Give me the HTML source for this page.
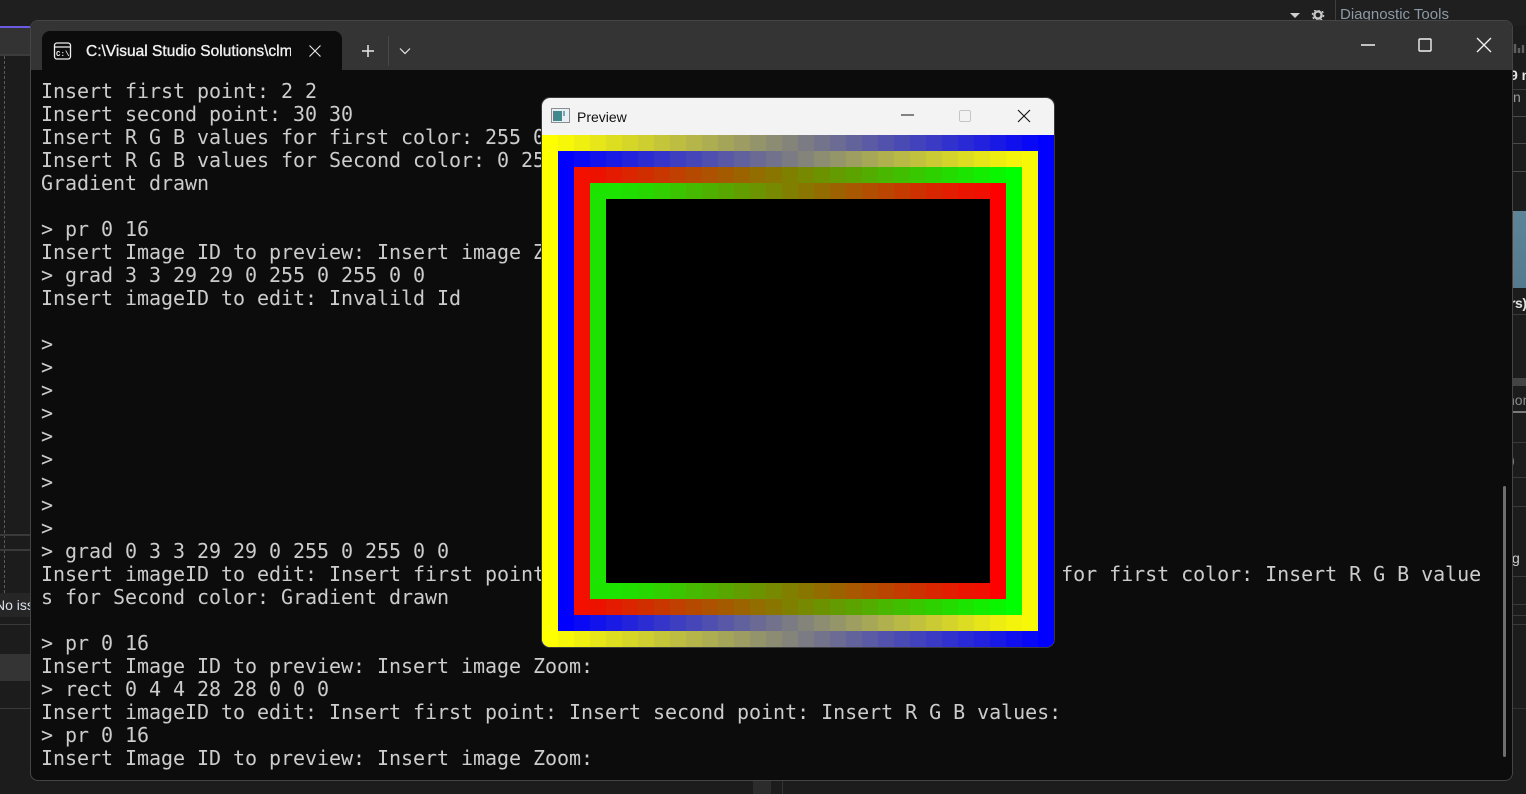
<!DOCTYPE html>
<html lang="en"><head><meta charset="utf-8"><title>Preview</title>
<style>
html,body{margin:0;padding:0;width:1526px;height:794px;overflow:hidden;background:#1c1c1c}
.a{position:absolute}
.l{position:absolute;background:#3a3a3a}
#term{position:absolute;left:30px;top:20px;width:1481px;height:759px;background:#0c0c0c;border:1px solid #454545;border-radius:8px;overflow:hidden}
#bar{position:absolute;left:0;top:0;width:100%;height:49px;background:#343434}
#tab{position:absolute;left:11px;top:10px;width:300px;height:39px;background:#0c0c0c;border-radius:8px 8px 0 0}
#tt{position:absolute;left:44px;top:11px;width:205px;height:20px;overflow:hidden;white-space:nowrap;font:15.5px/20px "Liberation Sans",sans-serif;-webkit-text-stroke:.35px #f0f0f0;color:#f0f0f0}
#con{position:absolute;left:10px;top:59px;margin:0;font:20px/23px "DejaVu Sans Mono",monospace;letter-spacing:-.04px;color:#cccccc;white-space:pre}
#sb{position:absolute;left:1472px;top:465px;width:3px;height:271px;background:#6e6e6e;border-radius:2px}
#pv{position:absolute;left:542px;top:98px;width:512px;height:549px;background:#f3f3f3;border-radius:8px;overflow:hidden;box-shadow:0 0 0 1px #3a3a3a}
#pt{position:absolute;left:35px;top:9px;font:14px/20px "Liberation Sans",sans-serif;color:#111}
#img{position:absolute;left:0;top:37px;display:block}
</style></head><body>

<!-- background IDE -->
<div class="a" style="left:0;top:0;width:1526px;height:26px;background:#1f1f1f"></div>
<div class="a" style="left:0;top:26px;width:31px;height:2px;background:#6a5ae0"></div>
<div class="a" style="left:0;top:28px;width:31px;height:26px;background:#333"></div>
<div class="a" style="left:0;top:54px;width:31px;height:2px;background:#3c3c3c"></div>
<div class="a" style="left:4px;top:56px;height:537px;border-left:1px dashed #5a5a5a"></div>
<div class="l" style="left:0;top:534px;width:31px;height:2px"></div>
<div class="l" style="left:0;top:549px;width:31px;height:2px"></div>
<div class="a" style="left:0;top:593px;width:31px;height:24px;background:#262626;overflow:hidden;font:14px/24px 'Liberation Sans',sans-serif;color:#d8e0e8;white-space:nowrap;text-indent:-5px">No issues</div>
<div class="l" style="left:0;top:624px;width:31px;height:1px"></div>
<div class="a" style="left:0;top:654px;width:31px;height:27px;background:#343434"></div>
<div class="l" style="left:0;top:708px;width:31px;height:1px"></div>

<svg class="a" style="left:1288px;top:10px" width="40" height="12" viewBox="0 0 40 12"><path d="M2 3h10l-5 5z" fill="#cfcfcf"/><circle cx="30" cy="5" r="3.6" fill="none" stroke="#c8c8c8" stroke-width="2.4"/><circle cx="30" cy="5" r="5.6" fill="none" stroke="#c8c8c8" stroke-width="1.4" stroke-dasharray="2 2.4"/></svg>
<div class="a" style="left:1335px;top:0;width:1px;height:20px;background:#3f3f3f"></div>
<div class="a" style="left:1340px;top:5px;width:140px;height:15px;overflow:hidden;font:15px/20px 'Liberation Sans',sans-serif;color:#8d9aa5;white-space:nowrap">Diagnostic Tools</div>

<div class="a" style="left:1512px;top:40px;width:14px;height:14px"><svg width="14" height="14"><path d="M3 4v9M7 8v5M11 5v8" stroke="#5e5e5e" stroke-width="2.4"/></svg></div>
<div class="a" style="left:1512px;top:65px;width:14px;height:20px;overflow:hidden;font:bold 14px/20px 'Liberation Sans',sans-serif;color:#e6e6e6;white-space:nowrap;text-indent:-2px">9 n</div>
<div class="l" style="left:1512px;top:89px;width:14px;height:1px"></div>
<div class="a" style="left:1513px;top:87px;width:13px;height:20px;overflow:hidden;font:14px/20px 'Liberation Sans',sans-serif;color:#9a9a9a">n</div>
<div class="l" style="left:1512px;top:116px;width:14px;height:1px;background:#4a4a4a"></div>
<div class="l" style="left:1512px;top:143px;width:14px;height:1px;background:#4a4a4a"></div>
<div class="l" style="left:1512px;top:171px;width:14px;height:1px;background:#4a4a4a"></div>
<div class="a" style="left:1512px;top:211px;width:14px;height:77px;background:linear-gradient(#5d8499,#557a8e)"></div>
<div class="a" style="left:1512px;top:293px;width:14px;height:20px;overflow:hidden;font:bold 14px/20px 'Liberation Sans',sans-serif;color:#e0e0e0;white-space:nowrap;text-indent:-2px;letter-spacing:-.4px">rs)</div>
<div class="l" style="left:1512px;top:314px;width:14px;height:1px"></div>
<div class="a" style="left:1512px;top:378px;width:14px;height:8px;background:#444"></div>
<div class="a" style="left:1512px;top:390px;width:14px;height:20px;overflow:hidden;font:14px/20px 'Liberation Sans',sans-serif;color:#8c8c8c;white-space:nowrap;text-indent:-5px">non</div>
<div class="a" style="left:1512px;top:411px;width:14px;height:2px;background:#7a7a7a"></div>
<div class="l" style="left:1512px;top:442px;width:14px;height:1px"></div>
<div class="a" style="left:1512px;top:450px;width:14px;height:20px;overflow:hidden;font:14px/20px 'Liberation Sans',sans-serif;color:#9a9a9a;text-indent:-2px">)</div>
<div class="l" style="left:1512px;top:477px;width:14px;height:1px"></div>
<div class="l" style="left:1512px;top:506px;width:14px;height:1px"></div>
<div class="a" style="left:1513px;top:548px;width:13px;height:20px;overflow:hidden;font:14px/20px 'Liberation Sans',sans-serif;color:#cfcfcf;text-indent:-1px">g</div>
<div class="l" style="left:1512px;top:576px;width:14px;height:1px"></div>
<div class="l" style="left:1512px;top:604px;width:14px;height:1px"></div>
<div class="l" style="left:1512px;top:615px;width:14px;height:1px"></div>
<div class="l" style="left:1512px;top:624px;width:14px;height:1px"></div>
<div class="l" style="left:1512px;top:708px;width:14px;height:1px;background:#303030"></div>
<div class="a" style="left:753px;top:781px;width:18px;height:13px;background:#2c2c2c"></div>
<div class="a" style="left:782px;top:781px;width:1px;height:13px;background:#333"></div>

<!-- terminal -->
<div id="term">
<div id="bar"></div>
<div id="tab">
<svg class="a" style="left:11px;top:10px" width="20" height="20" viewBox="0 0 20 20" fill="none"><rect x="1.5" y="2" width="16" height="16" rx="2.5" stroke="#f0f0f0" stroke-width="1.3"/><path d="M2 6h15" stroke="#f0f0f0" stroke-width="1.3"/><text x="3" y="15" font-family="Liberation Mono,monospace" font-size="7.5" font-weight="bold" fill="#f0f0f0">C:\</text></svg>
<div id="tt">C:\Visual Studio Solutions\clmgr.exe</div>
<svg class="a" style="left:266px;top:13px" width="14" height="14" fill="none"><path d="M1.500 1.500l11 11M12.500 1.500l-11 11" stroke="#e8e8e8" stroke-width="1.1"/></svg>
</div>
<svg class="a" style="left:329px;top:23px" width="16" height="14" fill="none"><path d="M8 1v12M2 7h12" stroke="#e8e8e8" stroke-width="1.5"/></svg>
<div class="a" style="left:357px;top:15px;width:1px;height:30px;background:#484848"></div>
<svg class="a" style="left:367px;top:25px" width="14" height="10" fill="none"><path d="M2 2.500l5 5 5-5" stroke="#e8e8e8" stroke-width="1.2"/></svg>
<svg class="a" style="left:1329px;top:17px" width="16" height="14" fill="none"><path d="M1 7h14" stroke="#f2f2f2" stroke-width="1.5"/></svg>
<svg class="a" style="left:1386px;top:16px" width="16" height="16" fill="none"><rect x="2" y="2" width="12" height="12" rx="1" stroke="#f2f2f2" stroke-width="1.4"/></svg>
<svg class="a" style="left:1444px;top:15px" width="18" height="18" fill="none"><path d="M2 2l14 14M16 2L2 16" stroke="#f2f2f2" stroke-width="1.300"/></svg>
<pre id="con">Insert first point: 2 2
Insert second point: 30 30
Insert R G B values for first color: 255 0 0
Insert R G B values for Second color: 0 255 0
Gradient drawn

&gt; pr 0 16
Insert Image ID to preview: Insert image Zoom:
&gt; grad 3 3 29 29 0 255 0 255 0 0
Insert imageID to edit: Invalild Id

&gt;
&gt;
&gt;
&gt;
&gt;
&gt;
&gt;
&gt;
&gt;
&gt; grad 0 3 3 29 29 0 255 0 255 0 0
Insert imageID to edit: Insert first point: Insert second point: Insert R G B values for first color: Insert R G B value
s for Second color: Gradient drawn

&gt; pr 0 16
Insert Image ID to preview: Insert image Zoom:
&gt; rect 0 4 4 28 28 0 0 0
Insert imageID to edit: Insert first point: Insert second point: Insert R G B values:
&gt; pr 0 16
Insert Image ID to preview: Insert image Zoom:</pre>
<div id="sb"></div>
</div>

<!-- preview -->
<div id="pv">
<svg class="a" style="left:9px;top:10px" width="20" height="16" viewBox="0 0 20 16"><rect x=".5" y=".5" width="18" height="14" fill="#e8eef2" stroke="#8a8f94"/><rect x="2" y="3" width="9" height="10" fill="#3f8a8c"/><rect x="12" y="3" width="2" height="5" fill="#7fa6b0"/></svg>
<div id="pt">Preview</div>
<svg class="a" style="left:358px;top:10px" width="16" height="14" fill="none"><path d="M1 7h13" stroke="#111" stroke-width="1"/></svg>
<svg class="a" style="left:416px;top:11px" width="14" height="14" fill="none"><rect x="1.500" y="1.500" width="11" height="11" rx="1.500" stroke="#c6c6c6"/></svg>
<svg class="a" style="left:474px;top:10px" width="16" height="16" fill="none"><path d="M2 2l12 12M14 2L2 14" stroke="#111" stroke-width="1.100"/></svg>
<svg id="img" width="512" height="512" viewBox="0 0 32 32" shape-rendering="crispEdges">
<defs>
<g id="r0"><rect x="0" width="1" height="1" fill="rgb(255,255,0)"/><rect x="1" width="1" height="1" fill="rgb(247,247,8)"/><rect x="2" width="1" height="1" fill="rgb(239,239,16)"/><rect x="3" width="1" height="1" fill="rgb(230,230,25)"/><rect x="4" width="1" height="1" fill="rgb(222,222,33)"/><rect x="5" width="1" height="1" fill="rgb(214,214,41)"/><rect x="6" width="1" height="1" fill="rgb(206,206,49)"/><rect x="7" width="1" height="1" fill="rgb(197,197,58)"/><rect x="8" width="1" height="1" fill="rgb(189,189,66)"/><rect x="9" width="1" height="1" fill="rgb(181,181,74)"/><rect x="10" width="1" height="1" fill="rgb(173,173,82)"/><rect x="11" width="1" height="1" fill="rgb(165,165,90)"/><rect x="12" width="1" height="1" fill="rgb(156,156,99)"/><rect x="13" width="1" height="1" fill="rgb(148,148,107)"/><rect x="14" width="1" height="1" fill="rgb(140,140,115)"/><rect x="15" width="1" height="1" fill="rgb(132,132,123)"/><rect x="16" width="1" height="1" fill="rgb(123,123,132)"/><rect x="17" width="1" height="1" fill="rgb(115,115,140)"/><rect x="18" width="1" height="1" fill="rgb(107,107,148)"/><rect x="19" width="1" height="1" fill="rgb(99,99,156)"/><rect x="20" width="1" height="1" fill="rgb(90,90,165)"/><rect x="21" width="1" height="1" fill="rgb(82,82,173)"/><rect x="22" width="1" height="1" fill="rgb(74,74,181)"/><rect x="23" width="1" height="1" fill="rgb(66,66,189)"/><rect x="24" width="1" height="1" fill="rgb(58,58,197)"/><rect x="25" width="1" height="1" fill="rgb(49,49,206)"/><rect x="26" width="1" height="1" fill="rgb(41,41,214)"/><rect x="27" width="1" height="1" fill="rgb(33,33,222)"/><rect x="28" width="1" height="1" fill="rgb(25,25,230)"/><rect x="29" width="1" height="1" fill="rgb(16,16,239)"/><rect x="30" width="1" height="1" fill="rgb(8,8,247)"/><rect x="31" width="1" height="1" fill="rgb(0,0,255)"/></g>
<g id="r1"><rect x="1" width="1" height="1" fill="rgb(0,0,255)"/><rect x="2" width="1" height="1" fill="rgb(9,9,246)"/><rect x="3" width="1" height="1" fill="rgb(18,18,237)"/><rect x="4" width="1" height="1" fill="rgb(26,26,229)"/><rect x="5" width="1" height="1" fill="rgb(35,35,220)"/><rect x="6" width="1" height="1" fill="rgb(44,44,211)"/><rect x="7" width="1" height="1" fill="rgb(53,53,202)"/><rect x="8" width="1" height="1" fill="rgb(62,62,193)"/><rect x="9" width="1" height="1" fill="rgb(70,70,185)"/><rect x="10" width="1" height="1" fill="rgb(79,79,176)"/><rect x="11" width="1" height="1" fill="rgb(88,88,167)"/><rect x="12" width="1" height="1" fill="rgb(97,97,158)"/><rect x="13" width="1" height="1" fill="rgb(106,106,149)"/><rect x="14" width="1" height="1" fill="rgb(114,114,141)"/><rect x="15" width="1" height="1" fill="rgb(123,123,132)"/><rect x="16" width="1" height="1" fill="rgb(132,132,123)"/><rect x="17" width="1" height="1" fill="rgb(141,141,114)"/><rect x="18" width="1" height="1" fill="rgb(149,149,106)"/><rect x="19" width="1" height="1" fill="rgb(158,158,97)"/><rect x="20" width="1" height="1" fill="rgb(167,167,88)"/><rect x="21" width="1" height="1" fill="rgb(176,176,79)"/><rect x="22" width="1" height="1" fill="rgb(185,185,70)"/><rect x="23" width="1" height="1" fill="rgb(193,193,62)"/><rect x="24" width="1" height="1" fill="rgb(202,202,53)"/><rect x="25" width="1" height="1" fill="rgb(211,211,44)"/><rect x="26" width="1" height="1" fill="rgb(220,220,35)"/><rect x="27" width="1" height="1" fill="rgb(229,229,26)"/><rect x="28" width="1" height="1" fill="rgb(237,237,18)"/><rect x="29" width="1" height="1" fill="rgb(243,243,12)"/><rect x="30" width="1" height="1" fill="rgb(247,247,8)"/></g>
<g id="r2"><rect x="2" width="1" height="1" fill="rgb(243,16,0)"/><rect x="3" width="1" height="1" fill="rgb(237,18,0)"/><rect x="4" width="1" height="1" fill="rgb(228,27,0)"/><rect x="5" width="1" height="1" fill="rgb(219,36,0)"/><rect x="6" width="1" height="1" fill="rgb(209,46,0)"/><rect x="7" width="1" height="1" fill="rgb(200,55,0)"/><rect x="8" width="1" height="1" fill="rgb(191,64,0)"/><rect x="9" width="1" height="1" fill="rgb(182,73,0)"/><rect x="10" width="1" height="1" fill="rgb(173,82,0)"/><rect x="11" width="1" height="1" fill="rgb(164,91,0)"/><rect x="12" width="1" height="1" fill="rgb(155,100,0)"/><rect x="13" width="1" height="1" fill="rgb(146,109,0)"/><rect x="14" width="1" height="1" fill="rgb(137,118,0)"/><rect x="15" width="1" height="1" fill="rgb(127,128,0)"/><rect x="16" width="1" height="1" fill="rgb(118,137,0)"/><rect x="17" width="1" height="1" fill="rgb(109,146,0)"/><rect x="18" width="1" height="1" fill="rgb(100,155,0)"/><rect x="19" width="1" height="1" fill="rgb(91,164,0)"/><rect x="20" width="1" height="1" fill="rgb(82,173,0)"/><rect x="21" width="1" height="1" fill="rgb(73,182,0)"/><rect x="22" width="1" height="1" fill="rgb(64,191,0)"/><rect x="23" width="1" height="1" fill="rgb(55,200,0)"/><rect x="24" width="1" height="1" fill="rgb(46,209,0)"/><rect x="25" width="1" height="1" fill="rgb(36,219,0)"/><rect x="26" width="1" height="1" fill="rgb(27,228,0)"/><rect x="27" width="1" height="1" fill="rgb(18,237,0)"/><rect x="28" width="1" height="1" fill="rgb(9,246,0)"/><rect x="29" width="1" height="1" fill="rgb(0,255,0)"/></g>
<g id="r3"><rect x="3" width="1" height="1" fill="rgb(28,228,0)"/><rect x="4" width="1" height="1" fill="rgb(28,228,0)"/><rect x="5" width="1" height="1" fill="rgb(32,223,0)"/><rect x="6" width="1" height="1" fill="rgb(39,216,0)"/><rect x="7" width="1" height="1" fill="rgb(49,206,0)"/><rect x="8" width="1" height="1" fill="rgb(59,196,0)"/><rect x="9" width="1" height="1" fill="rgb(69,186,0)"/><rect x="10" width="1" height="1" fill="rgb(78,177,0)"/><rect x="11" width="1" height="1" fill="rgb(88,167,0)"/><rect x="12" width="1" height="1" fill="rgb(98,157,0)"/><rect x="13" width="1" height="1" fill="rgb(108,147,0)"/><rect x="14" width="1" height="1" fill="rgb(118,137,0)"/><rect x="15" width="1" height="1" fill="rgb(128,127,0)"/><rect x="16" width="1" height="1" fill="rgb(137,118,0)"/><rect x="17" width="1" height="1" fill="rgb(147,108,0)"/><rect x="18" width="1" height="1" fill="rgb(157,98,0)"/><rect x="19" width="1" height="1" fill="rgb(167,88,0)"/><rect x="20" width="1" height="1" fill="rgb(177,78,0)"/><rect x="21" width="1" height="1" fill="rgb(186,69,0)"/><rect x="22" width="1" height="1" fill="rgb(196,59,0)"/><rect x="23" width="1" height="1" fill="rgb(206,49,0)"/><rect x="24" width="1" height="1" fill="rgb(216,39,0)"/><rect x="25" width="1" height="1" fill="rgb(226,29,0)"/><rect x="26" width="1" height="1" fill="rgb(235,20,0)"/><rect x="27" width="1" height="1" fill="rgb(240,15,0)"/><rect x="28" width="1" height="1" fill="rgb(255,0,0)"/></g>
</defs>
<rect width="32" height="32" fill="#000"/>
<rect x="0" y="0" width="1" height="32" fill="rgb(255,255,0)"/><rect x="31" y="0" width="1" height="32" fill="rgb(0,0,255)"/>
<rect x="1" y="1" width="1" height="30" fill="rgb(0,0,255)"/><rect x="30" y="1" width="1" height="30" fill="rgb(247,247,8)"/>
<rect x="2" y="2" width="1" height="28" fill="rgb(243,16,0)"/><rect x="29" y="2" width="1" height="28" fill="rgb(0,255,0)"/>
<rect x="3" y="3" width="1" height="26" fill="rgb(28,228,0)"/><rect x="28" y="3" width="1" height="26" fill="rgb(255,0,0)"/>
<use href="#r0" y="0"/><use href="#r0" y="31"/>
<use href="#r1" y="1"/><use href="#r1" y="30"/>
<use href="#r2" y="2"/><use href="#r2" y="29"/>
<use href="#r3" y="3"/><use href="#r3" y="28"/>
</svg>
</div>
</body></html>
